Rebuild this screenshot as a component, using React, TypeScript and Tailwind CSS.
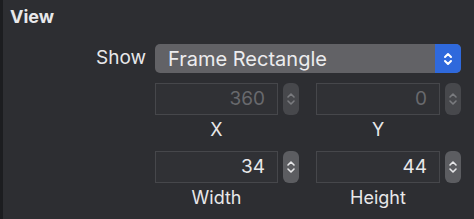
import React from 'react';

const font = { fontFamily: 'Inter, "Liberation Sans", sans-serif' };

const Chevrons = ({ color, w = 1.6 }: { color: string; w?: number }) => (
  <svg width="10" height="18" viewBox="0 0 10 18" fill="none" stroke={color} strokeWidth={w} strokeLinecap="round" strokeLinejoin="round">
    <path d="M2 7 L5 4 L8 7" />
    <path d="M2 11 L5 14 L8 11" />
  </svg>
);

interface FieldProps {
  value: string;
  label: string;
  disabled?: boolean;
  width: string;
}

const NumberField: React.FC<FieldProps> = ({ value, label, disabled, width }) => (
  <div className="flex flex-col">
    <div className="flex items-center gap-[5px]">
      <div
        className={`${width} h-[32px] bg-[#303135] border border-[#46474b] flex items-center justify-end pr-[12px] text-[19px] ${
          disabled ? 'text-[#68696d]' : 'text-[#e8e8ea]'
        }`}
      >
        {value}
      </div>
      <div
        className={`w-[16px] h-[32px] rounded-[6px] flex items-center justify-center ${
          disabled ? 'bg-[#47484c]' : 'bg-[#5c5d61]'
        }`}
      >
        <Chevrons color={disabled ? '#7a7b7f' : '#e6e6e8'} />
      </div>
    </div>
    <div className={`${width} text-center text-[18px] leading-[22px] mt-[4px] text-[#e8e8ea]`}>{label}</div>
  </div>
);

export default function App() {
  return (
    <div className="w-[474px] h-[219px] bg-[#2d2e32] border-l-[3px] border-[#1c1d20] overflow-hidden" style={font}>
      <div className="pl-[7px] pt-[6px] text-[18px] leading-[22px] font-bold text-[#e8e8ea]">View</div>
      <div className="flex items-center mt-[16px]">
        <div className="w-[152px] text-right text-[19px] text-[#e8e8ea] pr-[9px]">Show</div>
        <div className="w-[306px] h-[29px] rounded-[5px] bg-[#626266] flex items-center">
          <span className="flex-1 pl-[13px] text-[20px] text-[#ececee]">Frame Rectangle</span>
          <div className="w-[26px] h-full rounded-r-[5px] bg-[#2f69dc] flex items-center justify-center">
            <Chevrons color="#ffffff" w={2} />
          </div>
        </div>
      </div>
      <div className="pl-[152px] mt-[10px] flex gap-[17px]">
        <NumberField value="360" label="X" disabled width="w-[123px]" />
        <NumberField value="0" label="Y" disabled width="w-[124px]" />
      </div>
      <div className="pl-[152px] mt-[10px] flex gap-[17px]">
        <NumberField value="34" label="Width" width="w-[123px]" />
        <NumberField value="44" label="Height" width="w-[124px]" />
      </div>
    </div>
  );
}
